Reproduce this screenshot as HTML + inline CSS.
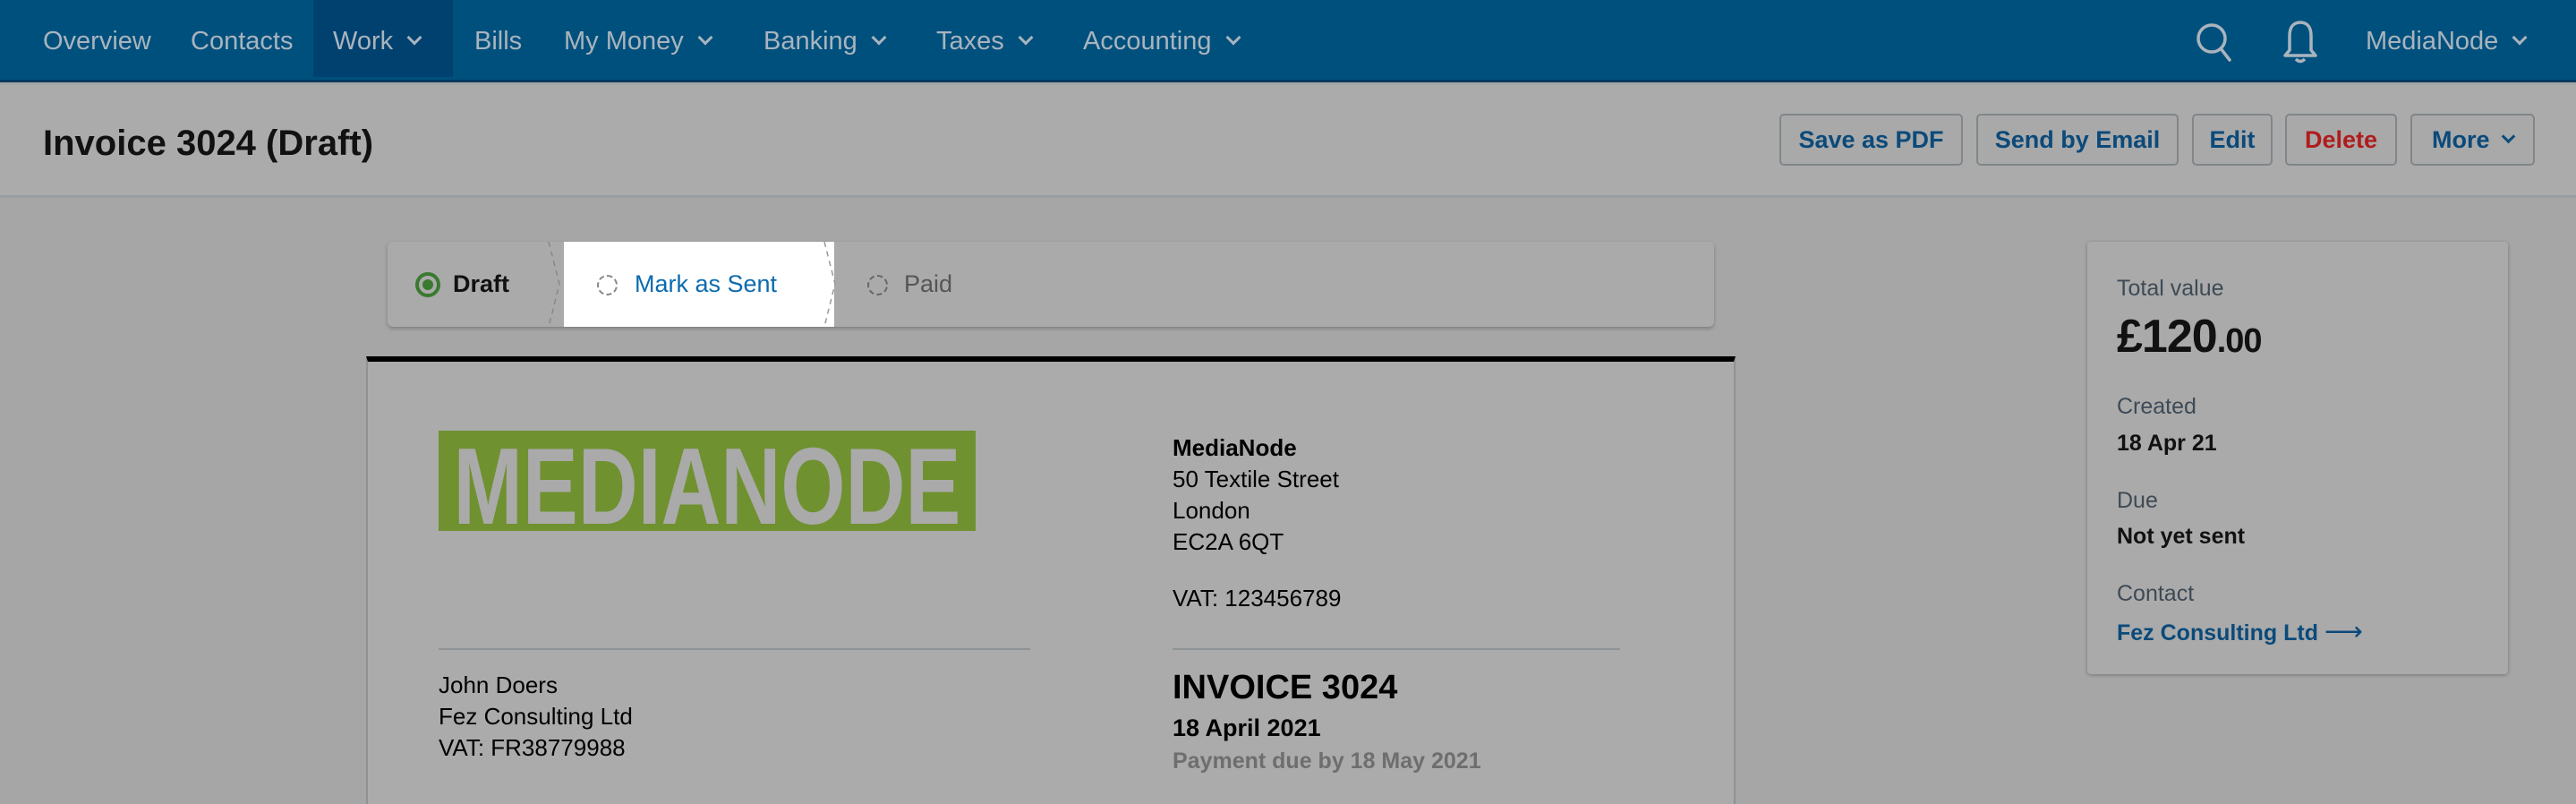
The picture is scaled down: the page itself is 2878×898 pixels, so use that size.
<!DOCTYPE html>
<html><head><meta charset="utf-8"><style>
*{margin:0;padding:0;box-sizing:border-box}
body{width:2878px;height:890px;overflow:hidden;background:#a6a6a6;font-family:"Liberation Sans",Arial,sans-serif;position:relative}
.a{position:absolute;white-space:nowrap}
.nav{position:absolute;left:0;top:0;width:2878px;height:92px;background:#00507e;border-bottom:3px solid #003a5e}
.nav .t{position:absolute;top:30px;font-size:29px;color:#a9b4bd}
.chev{display:inline-block;width:12px;height:12px;border-right:3px solid #a9b4bd;border-bottom:3px solid #a9b4bd;transform:rotate(45deg);margin-left:18px;position:relative;top:-7px}
.hdr{position:absolute;left:0;top:95px;width:2878px;height:126px;background:#ababab;border-bottom:3px solid #9a9ea3}
.btn{position:absolute;top:127px;height:58px;border:2px solid #80868a;border-radius:5px;background:#a9a9a9;color:#0b4a7a;font-weight:bold;font-size:27px;line-height:54px;text-align:center}
.steps{position:absolute;left:433px;top:270px;width:1482px;height:95px;background:#aaaaaa;border-radius:6px;box-shadow:0 2px 4px rgba(0,0,0,.25)}
.paper{position:absolute;left:409px;top:398px;width:1530px;height:500px;background:#ababab;border-top:6px solid #000;border-left:2px solid #8d9295;border-right:2px solid #8d9295}
.p{position:absolute;font-size:26px;color:#000;white-space:nowrap}
.card{position:absolute;left:2332px;top:270px;width:470px;height:483px;background:#aaaaaa;border-radius:4px;box-shadow:0 1px 4px rgba(0,0,0,.3)}
.lab{position:absolute;left:33px;font-size:25px;color:#3e4a55}
.val{position:absolute;left:33px;font-size:25px;font-weight:bold;color:#111}
</style></head><body>
<div class="nav">
<div style="position:absolute;left:350px;top:0;width:156px;height:86px;background:#004170"></div>
<div class="t" style="left:48px">Overview</div>
<div class="t" style="left:213px">Contacts</div>
<div class="t" style="left:372px">Work<span class="chev"></span></div>
<div class="t" style="left:530px">Bills</div>
<div class="t" style="left:630px">My Money<span class="chev"></span></div>
<div class="t" style="left:853px">Banking<span class="chev"></span></div>
<div class="t" style="left:1046px">Taxes<span class="chev"></span></div>
<div class="t" style="left:1210px">Accounting<span class="chev"></span></div>
<svg class="a" style="left:2452px;top:24px" width="44" height="46" viewBox="0 0 44 46"><circle cx="19" cy="19" r="15" fill="none" stroke="#a9b4bd" stroke-width="3.5"/><path d="M29 30 L39 43" stroke="#a9b4bd" stroke-width="3.5" stroke-linecap="round"/></svg>
<svg class="a" style="left:2548px;top:22px" width="44" height="50" viewBox="0 0 44 50"><path d="M22 3 C13 3 10 10 10 18 L10 34 L5 40 L39 40 L34 34 L34 18 C34 10 31 3 22 3 Z" fill="none" stroke="#a9b4bd" stroke-width="3.5" stroke-linejoin="round"/><path d="M17 44 Q22 49 27 44" fill="none" stroke="#a9b4bd" stroke-width="3.5"/></svg>
<div class="t" style="left:2643px">MediaNode<span class="chev"></span></div>
</div>
<div class="hdr"></div>
<div class="a" style="left:48px;top:138px;font-size:40px;font-weight:bold;color:#111">Invoice 3024 (Draft)</div>
<div class="btn" style="left:1988px;width:205px">Save as PDF</div>
<div class="btn" style="left:2208px;width:226px">Send by Email</div>
<div class="btn" style="left:2449px;width:90px">Edit</div>
<div class="btn" style="left:2553px;width:125px;color:#b01c1c">Delete</div>
<div class="btn" style="left:2693px;width:139px">More <span class="chev" style="border-color:#0b4a7a;margin-left:8px;width:11px;height:11px"></span></div>
<div class="steps">
<div class="a" style="left:197px;top:0;width:302px;height:95px;background:#fff"></div>
<svg class="a" style="left:0;top:0" width="600" height="95"><path d="M180 0 L192 47 L180 95" fill="none" stroke="#888" stroke-width="1.5" stroke-dasharray="6 5"/><path d="M488 0 L500 47 L488 95" fill="none" stroke="#999" stroke-width="1.5" stroke-dasharray="6 5"/></svg>
<div class="a" style="left:31px;top:34px;width:28px;height:28px;border:4px solid #3a7a30;border-radius:50%"><div style="margin:4px;width:12px;height:12px;background:#3a7a30;border-radius:50%"></div></div>
<div class="a" style="left:73px;top:32px;font-size:27px;font-weight:bold;color:#111">Draft</div>
<div class="a" style="left:234px;top:37px;width:23px;height:23px;border:2px dashed #888;border-radius:50%"></div>
<div class="a" style="left:276px;top:32px;font-size:27px;color:#0b6bb0">Mark as Sent</div>
<div class="a" style="left:536px;top:37px;width:23px;height:23px;border:2px dashed #666;border-radius:50%"></div>
<div class="a" style="left:577px;top:32px;font-size:27px;color:#555">Paid</div>
</div>
<div class="paper">
<div class="a" style="left:79px;top:77px;width:600px;height:112px;background:#6f9130;overflow:hidden"><span style="position:absolute;left:50%;top:4px;transform:translateX(-50%) scaleX(0.76);color:#aaa;font-weight:bold;font-size:122px;line-height:116px">MEDIANODE</span></div>
<div class="p" style="left:899px;top:81px;font-weight:bold">MediaNode</div>
<div class="p" style="left:899px;top:116px">50 Textile Street</div>
<div class="p" style="left:899px;top:151px">London</div>
<div class="p" style="left:899px;top:186px">EC2A 6QT</div>
<div class="p" style="left:899px;top:249px">VAT: 123456789</div>
<div class="a" style="left:79px;top:320px;width:661px;height:2px;background:#8e9396"></div>
<div class="a" style="left:899px;top:320px;width:500px;height:2px;background:#8e9396"></div>
<div class="p" style="left:79px;top:346px">John Doers</div>
<div class="p" style="left:79px;top:381px">Fez Consulting Ltd</div>
<div class="p" style="left:79px;top:416px">VAT: FR38779988</div>
<div class="p" style="left:899px;top:343px;font-size:38px;font-weight:bold">INVOICE 3024</div>
<div class="p" style="left:899px;top:394px;font-size:27px;font-weight:bold">18 April 2021</div>
<div class="p" style="left:899px;top:432px;font-size:25px;font-weight:bold;color:#6e6e6e">Payment due by 18 May 2021</div>
</div>
<div class="card">
<div class="lab" style="top:38px">Total value</div>
<div class="val" style="top:76px;font-size:52px;letter-spacing:-1px">£120<span style="font-size:38px">.00</span></div>
<div class="lab" style="top:170px">Created</div>
<div class="val" style="top:211px">18 Apr 21</div>
<div class="lab" style="top:275px">Due</div>
<div class="val" style="top:315px">Not yet sent</div>
<div class="lab" style="top:379px">Contact</div>
<div class="val" style="top:418px;color:#0b4a7a">Fez Consulting Ltd <span style="font-weight:normal;font-size:30px">⟶</span></div>
</div>
</body></html>
